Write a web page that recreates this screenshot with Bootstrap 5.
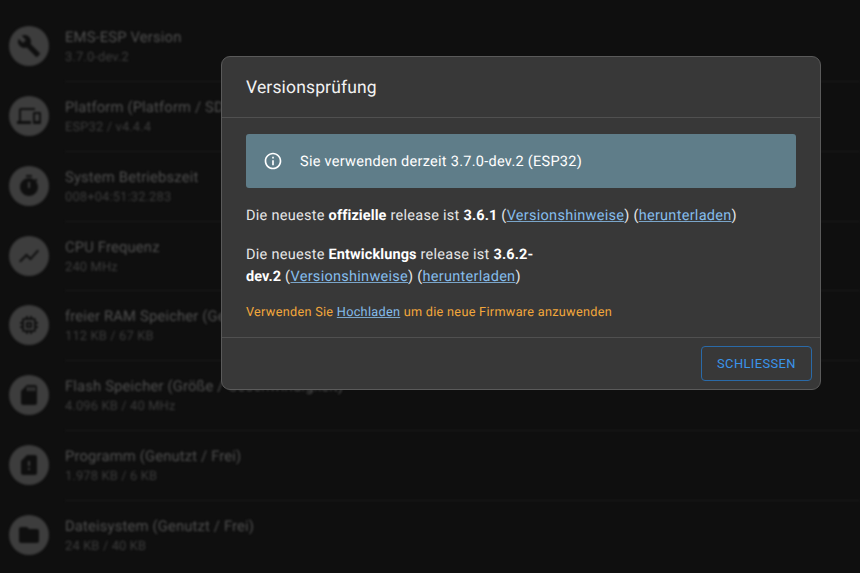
<!DOCTYPE html>
<html lang="de">
<head>
<meta charset="utf-8">
<title>Versionsprüfung</title>
<link href="https://cdn.jsdelivr.net/npm/bootstrap@5.3.0/dist/css/bootstrap.min.css" rel="stylesheet">
<style>
html,body{height:100%;}
body{background:#0f0f0f;font-family:Roboto,"Liberation Sans",sans-serif;overflow:hidden;position:relative;width:860px;height:573px;text-rendering:geometricPrecision;}
.bg-list{filter:blur(1px);padding-top:12px;}
.bg-row{height:69.85px;padding-left:9px;gap:16px;}
.bg-ava{width:40px;height:40px;border-radius:50%;background:#3d3d3d;flex:none;margin-top:14px;}
.bg-ava svg{width:24px;height:24px;fill:#0f0f0f;}
.bg-txt{flex:1;height:69.85px;border-bottom:1px solid #1c1c1c;padding-top:6px;}
.bg-t{font-size:14.8px;line-height:20px;color:#4f4f4f;letter-spacing:.15px;margin-top:9px;white-space:nowrap;}
.bg-s{font-size:12.9px;line-height:20px;color:#3c3c3c;letter-spacing:.15px;white-space:nowrap;margin-top:1px;}
.dlg{position:absolute;left:221px;top:56px;width:600px;height:334px;background:#383838;border:1px solid #5a5a5a;border-radius:9px;color:#eee;}
.dlg-head{height:61px;border-bottom:1px solid #505050;padding:2px 24px 0;font-size:17.5px;letter-spacing:.15px;color:#f2f2f2;}
.dlg-body{height:219px;padding:16px 24px 0;font-size:14.5px;line-height:22px;letter-spacing:.28px;color:#e6e6e6;}
.info-box{height:54px;background:#5f7d89;border-radius:3px;padding:1px 0 0 17px;gap:17px;color:#fff;margin-bottom:17px;}
.info-box svg{width:20px;height:20px;fill:#fff;flex:none;margin-top:-1px;}
.dlg-body p{margin:0 0 17px;}
.dlg-body b{font-weight:700;color:#fff;letter-spacing:.1px;}
.dlg-body a{color:#85bdec;text-decoration-color:rgba(144,202,249,.75);}
.dlg-body p.hint{font-size:12.7px;color:#f2a73b;margin-top:-3px;letter-spacing:.29px;}
.dlg-foot{height:52px;border-top:1px solid #505050;padding:8px 8px 0 0;}
.btn-close-out{width:111px;height:35px;padding:0;border:1px solid #2a6aa8;border-radius:4px;background:transparent;color:#3a94ea;font-size:12.9px;font-weight:400;letter-spacing:.4px;}
</style>
</head>
<body>
<div class="bg-list d-flex flex-column">
  <div class="bg-row d-flex"><div class="bg-ava d-flex align-items-center justify-content-center"><svg viewBox="0 0 24 24"><path d="m22.7 19-9.1-9.1c.9-2.3.4-5-1.5-6.9-2-2-5-2.4-7.4-1.3L9 6 6 9 1.600 4.700C.4 7.100.9 10.100 2.900 12.100c1.900 1.900 4.600 2.400 6.900 1.500l9.100 9.100c.4.400 1 .4 1.400 0l2.300-2.300c.5-.4.500-1.100.100-1.400z"/></svg></div><div class="bg-txt"><div class="bg-t">EMS-ESP Version</div><div class="bg-s">3.7.0-dev.2</div></div></div>
  <div class="bg-row d-flex"><div class="bg-ava d-flex align-items-center justify-content-center"><svg viewBox="0 0 24 24"><path d="M4 6h14V4H4c-1.100 0-2 .9-2 2v11H0v3h14v-3H4V6zm19 2h-6c-.5 0-1 .5-1 1v10c0 .5.500 1 1 1h6c.5 0 1-.5 1-1V9c0-.5-.5-1-1-1zm-1 9h-4v-7h4v7z"/></svg></div><div class="bg-txt"><div class="bg-t">Platform (Platform / SDK)</div><div class="bg-s">ESP32 / v4.4.4</div></div></div>
  <div class="bg-row d-flex"><div class="bg-ava d-flex align-items-center justify-content-center"><svg viewBox="0 0 24 24"><path d="M15 1H9v2h6V1zm4.030 6.390 1.420-1.420c-.43-.51-.9-.99-1.410-1.410l-1.420 1.420C16.070 4.740 14.120 4 12 4c-4.970 0-9 4.030-9 9s4.020 9 9 9 9-4.030 9-9c0-2.120-.74-4.070-1.970-5.610zM13 14h-2V8h2v6z"/></svg></div><div class="bg-txt"><div class="bg-t">System Betriebszeit</div><div class="bg-s">008+04:51:32.283</div></div></div>
  <div class="bg-row d-flex"><div class="bg-ava d-flex align-items-center justify-content-center"><svg viewBox="0 0 24 24"><path d="m3.500 18.490 6-6.010 4 4L22 6.920l-1.410-1.410-7.090 7.970-4-4L2 16.990z"/></svg></div><div class="bg-txt"><div class="bg-t">CPU Frequenz</div><div class="bg-s">240 MHz</div></div></div>
  <div class="bg-row d-flex"><div class="bg-ava d-flex align-items-center justify-content-center"><svg viewBox="0 0 24 24"><path d="M15 9H9v6h6V9zm-2 4h-2v-2h2v2zm8-2V9h-2V7c0-1.100-.9-2-2-2h-2V3h-2v2h-2V3H9v2H7c-1.100 0-2 .9-2 2v2H3v2h2v2H3v2h2v2c0 1.100.9 2 2 2h2v2h2v-2h2v2h2v-2h2c1.100 0 2-.9 2-2v-2h2v-2h-2v-2h2zm-4 6H7V7h10v10z"/></svg></div><div class="bg-txt"><div class="bg-t">freier RAM Speicher (Gesamt / Frei)</div><div class="bg-s">112 KB / 67 KB</div></div></div>
  <div class="bg-row d-flex"><div class="bg-ava d-flex align-items-center justify-content-center"><svg viewBox="0 0 24 24"><path d="M18 2h-8L4.020 8 4 20c0 1.100.9 2 2 2h12c1.100 0 2-.9 2-2V4c0-1.100-.9-2-2-2zm-6 6h-2V4h2v4zm3 0h-2V4h2v4zm3 0h-2V4h2v4z"/></svg></div><div class="bg-txt"><div class="bg-t">Flash Speicher (Größe / Geschwindigkeit)</div><div class="bg-s">4.096 KB / 40 MHz</div></div></div>
  <div class="bg-row d-flex"><div class="bg-ava d-flex align-items-center justify-content-center"><svg viewBox="0 0 24 24"><path d="M18 2h-8L4.020 8 4 20c0 1.100.9 2 2 2h12c1.100 0 2-.9 2-2V4c0-1.100-.9-2-2-2zm-5 15h-2v-2h2v2zm0-4h-2V8h2v5z"/></svg></div><div class="bg-txt"><div class="bg-t">Programm (Genutzt / Frei)</div><div class="bg-s">1.978 KB / 6 KB</div></div></div>
  <div class="bg-row d-flex"><div class="bg-ava d-flex align-items-center justify-content-center"><svg viewBox="0 0 24 24"><path d="M10 4H4c-1.100 0-1.990.9-1.990 2L2 18c0 1.100.9 2 2 2h16c1.100 0 2-.9 2-2V8c0-1.100-.9-2-2-2h-8l-2-2z"/></svg></div><div class="bg-txt border-0"><div class="bg-t">Dateisystem (Genutzt / Frei)</div><div class="bg-s">24 KB / 40 KB</div></div></div>
</div>
<div class="dlg" role="dialog">
  <div class="dlg-head d-flex align-items-center">Versionsprüfung</div>
  <div class="dlg-body">
    <div class="info-box d-flex align-items-center">
      <svg viewBox="0 0 24 24"><path d="M11 7h2v2h-2zm0 4h2v6h-2zm1-9C6.480 2 2 6.480 2 12s4.480 10 10 10 10-4.480 10-10S17.520 2 12 2zm0 18c-4.410 0-8-3.590-8-8s3.590-8 8-8 8 3.590 8 8-3.590 8-8 8z"/></svg>
      <span>Sie verwenden derzeit 3.7.0-dev.2 (ESP32)</span>
    </div>
    <p>Die neueste <b>offizielle</b> release ist <b>3.6.1</b>&nbsp;(<a href="#">Versionshinweise</a>)&nbsp;(<a href="#">herunterladen</a>)</p>
    <p>Die neueste <b>Entwicklungs</b> release ist <b>3.6.2-dev.2</b>&nbsp;(<a href="#">Versionshinweise</a>)&nbsp;(<a href="#">herunterladen</a>)</p>
    <p class="hint">Verwenden Sie <a href="#">Hochladen</a> um die neue Firmware anzuwenden</p>
  </div>
  <div class="dlg-foot d-flex justify-content-end"><button type="button" class="btn btn-close-out">SCHLIESSEN</button></div>
</div>
<script src="https://cdn.jsdelivr.net/npm/bootstrap@5.3.0/dist/js/bootstrap.bundle.min.js"></script>
</body>
</html>
